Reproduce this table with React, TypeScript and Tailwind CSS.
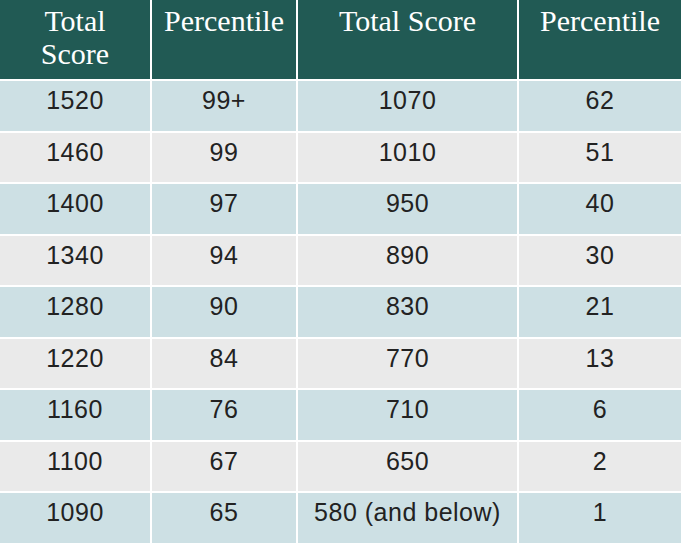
const rows: [string, string, string, string][] = [
  ["1520", "99+", "1070", "62"],
  ["1460", "99", "1010", "51"],
  ["1400", "97", "950", "40"],
  ["1340", "94", "890", "30"],
  ["1280", "90", "830", "21"],
  ["1220", "84", "770", "13"],
  ["1160", "76", "710", "6"],
  ["1100", "67", "650", "2"],
  ["1090", "65", "580 (and below)", "1"],
];

const headers = ["Total Score", "Percentile", "Total Score", "Percentile"];

export default function App() {
  return (
    <div className="grid h-[543px] w-[681px] grid-cols-[150px_144px_219px_162px] grid-rows-[79px_repeat(9,minmax(0,1fr))] gap-[2px] bg-white">
      {headers.map((h, i) => (
        <div
          key={i}
          className="bg-[#215a54] px-3 pt-[4px] text-center font-['Liberation_Serif',serif] text-[30px] leading-[33px] text-white"
        >
          {h}
        </div>
      ))}
      {rows.map((row, r) =>
        row.map((cell, c) => (
          <div
            key={`${r}-${c}`}
            className={`${
              r % 2 === 0 ? "bg-[#cde0e4]" : "bg-[#eaeaea]"
            } pt-[4px] text-center font-['Liberation_Sans',sans-serif] text-[25px] leading-[30px] tracking-[0.5px] text-[#222]`}
          >
            {cell}
          </div>
        ))
      )}
    </div>
  );
}
